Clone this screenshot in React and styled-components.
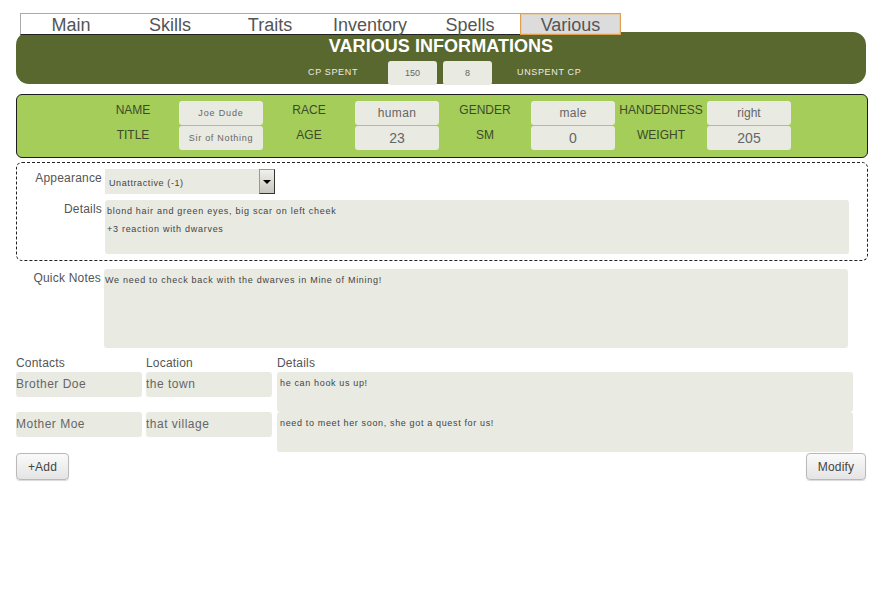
import React from 'react';
import styled, { createGlobalStyle } from 'styled-components';

const GlobalStyle = createGlobalStyle`
  html, body {
    margin: 0;
    padding: 0;
    background: #fff;
    font-family: "Liberation Sans", Arial, sans-serif;
    color: #444;
  }
`;

const Page = styled.div`
  width: 888px;
  height: 607px;
  box-sizing: border-box;
  padding: 13px 20px 0 16px;
  overflow: hidden;
`;

const TabBar = styled.div`
  position: relative;
  z-index: 1;
  display: flex;
  box-sizing: border-box;
  width: 601px;
  height: 22px;
  margin: 0 0 -3px 4px;
  background: #fff;
  border-top: 1px solid #aaa;
  border-left: 1px solid #aaa;
  border-bottom: 1px solid #222;
`;

const Tab = styled.div`
  box-sizing: border-box;
  flex: 0 0 ${p => (p.$active ? '101px' : '100px')};
  height: 22px;
  margin-top: ${p => (p.$active ? '-1px' : '0')};
  font-size: 18px;
  line-height: ${p => (p.$active ? '22px' : '23px')};
  text-align: center;
  color: #555;
  background: ${p => (p.$active ? '#dcdcdc' : 'transparent')};
  border: ${p => (p.$active ? '1px solid #e0a050' : 'none')};
  box-shadow: ${p => (p.$active ? 'inset 0 0 0 1px rgba(235, 195, 140, 0.6)' : 'none')};

  &:first-child {
    margin-left: -1px;
    padding-left: 2px;
  }
`;

const Header = styled.div`
  box-sizing: border-box;
  width: 850px;
  height: 52px;
  padding-top: 4px;
  border-radius: 13px;
  background: #58682f;
  display: flex;
  flex-direction: column;
  align-items: center;
`;

const Title = styled.h1`
  margin: 0;
  font-size: 18px;
  line-height: 20px;
  letter-spacing: 0.05px;
  font-weight: bold;
  color: #fff;
`;

const CpRow = styled.div`
  display: grid;
  grid-template-columns: 80px 49px 49px 88px;
  column-gap: 6px;
  align-self: flex-start;
  margin-top: 5px;
  margin-left: 286px;
  height: 24px;
`;

const CpLabel = styled.span`
  font-size: 9px;
  letter-spacing: 0.65px;
  line-height: 22px;
  color: #ecece4;
  padding-left: ${p => (p.$right ? '19px' : '6px')};
  white-space: nowrap;
`;

const Field = styled.div`
  box-sizing: border-box;
  background: #e9eae2;
  border-radius: 3px;
  text-align: ${p => (p.$align || 'center')};
  font-size: ${p => p.$size || 14}px;
  line-height: ${p => p.$line || 24}px;
  letter-spacing: ${p => p.$spacing || 0}px;
  color: #666;
  white-space: nowrap;
`;

const CpField = styled(Field)`
  height: 24px;
`;

const StatPanel = styled.div`
  box-sizing: border-box;
  width: 852px;
  height: 64px;
  margin-top: 10px;
  padding: 6px 0 0 70px;
  background: #a4cd5a;
  border: 1px solid #1c1c1c;
  border-radius: 6px;
  display: grid;
  grid-template-columns: repeat(4, 92px 84px);
  grid-auto-rows: 25px;
`;

const StatLabel = styled.div`
  font-size: 12px;
  line-height: 18px;
  text-align: center;
  color: #3d4a2a;
  white-space: nowrap;
`;

const StatField = styled(Field)`
  height: 24px;
`;

const AppearancePanel = styled.div`
  box-sizing: border-box;
  width: 852px;
  height: 99px;
  margin-top: 4px;
  padding: 6px 18px 0 0;
  border: 1px dashed #222;
  border-radius: 6px;
  display: grid;
  grid-template-columns: 85px 1fr;
  column-gap: 3px;
  grid-template-rows: 25px 54px;
  row-gap: 6px;
`;

const FormLabel = styled.label`
  font-size: 12px;
  line-height: 18px;
  letter-spacing: 0.2px;
  text-align: right;
  color: #555;
  white-space: nowrap;
`;

const Select = styled.div`
  position: relative;
  box-sizing: border-box;
  width: 170px;
  height: 25px;
  padding: 2px 0 0 4px;
  background: #e9eae2;
  font-size: 9px;
  line-height: 25px;
  letter-spacing: 0.6px;
  color: #444;
`;

const SelectArrow = styled.span`
  position: absolute;
  top: 0;
  right: 0;
  box-sizing: border-box;
  width: 16px;
  height: 25px;
  background: linear-gradient(#f1f0ec, #c8c6c0);
  border: 1px solid #999;
  border-right-color: #333;
  border-bottom-color: #333;

  &::after {
    content: '';
    position: absolute;
    left: 3px;
    top: 10px;
    border-left: 4px solid transparent;
    border-right: 4px solid transparent;
    border-top: 4px solid #000;
  }
`;

const TextBlock = styled.div`
  box-sizing: border-box;
  height: ${p => p.$height}px;
  padding: ${p => p.$pad || '4px 3px'};
  background: #e9eae2;
  border-radius: 3px;
  font-size: 9px;
  line-height: 18px;
  letter-spacing: 0.72px;
  color: #444;
  white-space: pre-line;
`;

const NotesRow = styled.div`
  display: grid;
  grid-template-columns: 85px 744px;
  column-gap: 3px;
  margin-top: 8px;
`;

const ContactsGrid = styled.div`
  display: grid;
  grid-template-columns: 126px 126px 577px;
  column-gap: 4px;
  grid-template-rows: 17px 40px 40px;
  margin-top: 7px;
  width: 837px;
`;

const ColumnHead = styled.div`
  font-size: 12px;
  line-height: 16px;
  letter-spacing: 0.2px;
  color: #555;
  margin-left: ${p => (p.$shift ? '1px' : '0')};
`;

const ContactField = styled(Field)`
  height: 25px;
  font-size: 12px;
  line-height: 25px;
  letter-spacing: 0.5px;
`;

const ContactNote = styled(TextBlock)`
  margin-left: 1px;
  line-height: 14px;
  letter-spacing: 0.65px;
  padding: 4px 3px;
`;

const Actions = styled.div`
  display: flex;
  justify-content: space-between;
  width: 850px;
  margin-top: 1px;
`;

const Button = styled.button`
  box-sizing: border-box;
  height: 27px;
  width: ${p => p.$width}px;
  padding: 0;
  font-family: inherit;
  font-size: 12px;
  letter-spacing: 0.2px;
  color: #444;
  background: linear-gradient(#fafafa, #e4e4e4);
  border: 1px solid #b9b9b9;
  border-radius: 4px;
  box-shadow: 0 1px 1px rgba(0, 0, 0, 0.15);
`;

const tabs = ['Main', 'Skills', 'Traits', 'Inventory', 'Spells', 'Various'];

const stats = [
  ['NAME', 'Joe Dude', 9, 0.85],
  ['RACE', 'human', 12, 0.4],
  ['GENDER', 'male', 12, 0.3],
  ['HANDEDNESS', 'right', 12, 0],
  ['TITLE', 'Sir of Nothing', 9, 0.7],
  ['AGE', '23', 14, 0],
  ['SM', '0', 14, 0],
  ['WEIGHT', '205', 14, 0],
];

const contacts = [
  { name: 'Brother Doe', location: 'the town', details: 'he can hook us up!' },
  { name: 'Mother Moe', location: 'that village', details: 'need to meet her soon, she got a quest for us!' },
];

export default function App() {
  return (
    <Page>
      <GlobalStyle />
      <TabBar>
        {tabs.map(tab => (
          <Tab key={tab} $active={tab === 'Various'}>{tab}</Tab>
        ))}
      </TabBar>

      <Header>
        <Title>VARIOUS INFORMATIONS</Title>
        <CpRow>
          <CpLabel>CP SPENT</CpLabel>
          <CpField $size={9}>150</CpField>
          <CpField $size={9}>8</CpField>
          <CpLabel $right>UNSPENT CP</CpLabel>
        </CpRow>
      </Header>

      <StatPanel>
        {stats.map(([label, value, size, spacing]) => (
          <React.Fragment key={label}>
            <StatLabel>{label}</StatLabel>
            <StatField $size={size} $spacing={spacing}>{value}</StatField>
          </React.Fragment>
        ))}
      </StatPanel>

      <AppearancePanel>
        <FormLabel>Appearance</FormLabel>
        <Select>
          Unattractive (-1)
          <SelectArrow />
        </Select>
        <FormLabel>Details</FormLabel>
        <TextBlock $height={54} $pad="2px 2px">
          {'blond hair and green eyes, big scar on left cheek\n+3 reaction with dwarves'}
        </TextBlock>
      </AppearancePanel>

      <NotesRow>
        <FormLabel>Quick Notes</FormLabel>
        <TextBlock $height={79} $pad="2px 1px">
          We need to check back with the dwarves in Mine of Mining!
        </TextBlock>
      </NotesRow>

      <ContactsGrid>
        <ColumnHead>Contacts</ColumnHead>
        <ColumnHead>Location</ColumnHead>
        <ColumnHead $shift>Details</ColumnHead>
        {contacts.map(contact => (
          <React.Fragment key={contact.name}>
            <ContactField $align="left">{contact.name}</ContactField>
            <ContactField $align="left">{contact.location}</ContactField>
            <ContactNote $height={40}>{contact.details}</ContactNote>
          </React.Fragment>
        ))}
      </ContactsGrid>

      <Actions>
        <Button $width={53}>+Add</Button>
        <Button $width={60}>Modify</Button>
      </Actions>
    </Page>
  );
}
